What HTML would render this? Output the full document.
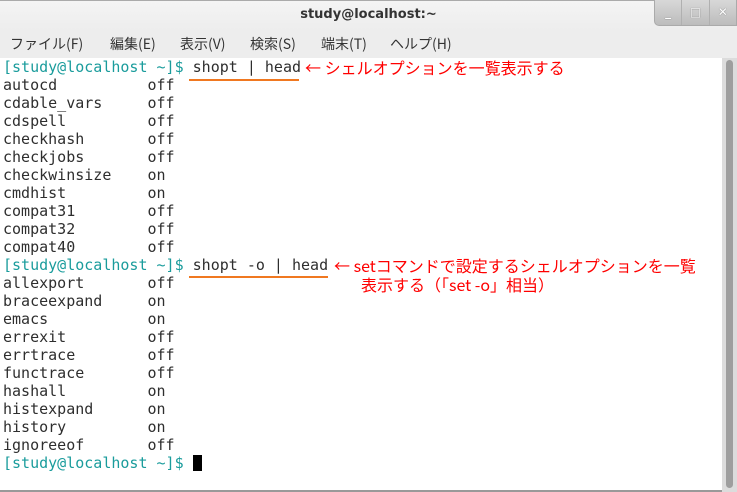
<!DOCTYPE html>
<html><head><meta charset="utf-8"><style>
body{margin:0;width:737px;height:492px;overflow:hidden;background:#fff;position:relative;font-family:"DejaVu Sans","Noto Sans CJK JP",sans-serif}
#title{position:absolute;left:0;top:0;width:737px;height:30px;background:linear-gradient(#f4f4f4,#ededed);text-align:center;font-weight:bold;font-size:13px;line-height:28px;color:#333;border-top:1px solid #aaa;box-sizing:border-box}
#btns{position:absolute;left:654px;top:0;width:83px;height:26px;background:linear-gradient(#d8d8d8,#bcbcbc);border:1px solid #aaa;border-top:none;border-radius:0 0 0 5px;box-sizing:border-box;display:flex}
#btns div{flex:1;border-left:1px solid #b0b0b0;color:#fff;font-size:12px;text-align:center;line-height:25px;font-weight:bold;text-shadow:0 0 1px #555}
#btns div:first-child{border-left:none}
#menu{position:absolute;left:0;top:30px;width:737px;height:28px;background:#ededed;font-size:14px;line-height:28px;color:#333;font-family:"Noto Sans CJK JP",sans-serif}
#menu span{position:absolute;top:0px}
#term{position:absolute;left:0;top:58px;width:722px;height:432px;background:#fff;border-bottom:2px solid #999}
pre{margin:0;position:absolute;left:3px;top:0;font-family:"DejaVu Sans Mono",monospace;font-size:15px;line-height:18px;color:#2e2e2e}
.p{color:#1a9c9c}
#sb{position:absolute;left:722px;top:58px;width:15px;height:434px;background:#dcdcdc}
#th{position:absolute;left:726px;top:60px;width:7px;height:428px;background:#9e9e9e;border-radius:4px}
.a{position:absolute;color:#f00;font-size:16px;white-space:nowrap;line-height:18px;font-family:"Noto Sans CJK JP",sans-serif}
.u{position:absolute;height:2px;background:#f07820}
.cur{display:inline-block;width:9px;height:16px;background:#000;vertical-align:-3px}
</style></head><body>
<div id="title">study@localhost:~</div>
<div id="btns"><div>_</div><div>□</div><div>✕</div></div>
<div id="menu"><span style="left:10px">ファイル(F)</span><span style="left:110px">編集(E)</span><span style="left:180px">表示(V)</span><span style="left:250px">検索(S)</span><span style="left:321px">端末(T)</span><span style="left:390px">ヘルプ(H)</span></div>
<div id="term"><pre><span class="p">[study@localhost ~]$</span> shopt | head
autocd          off
cdable_vars     off
cdspell         off
checkhash       off
checkjobs       off
checkwinsize    on
cmdhist         on
compat31        off
compat32        off
compat40        off
<span class="p">[study@localhost ~]$</span> shopt -o | head
allexport       off
braceexpand     on
emacs           on
errexit         off
errtrace        off
functrace       off
hashall         on
histexpand      on
history         on
ignoreeof       off
<span class="p">[study@localhost ~]$</span> <span class="cur"></span></pre></div>
<div id="sb"></div><div id="th"></div>
<div class="u" style="left:189px;top:79px;width:110px"></div>
<div class="u" style="left:189px;top:276px;width:139px"></div>
<div class="a" style="left:305px;top:58px">← シェルオプションを一覧表示する</div>
<div class="a" style="left:334px;top:256px">← setコマンドで設定するシェルオプションを一覧</div>
<div class="a" style="left:361px;top:275px">表示する（「set -o」相当）</div>
</body></html>
